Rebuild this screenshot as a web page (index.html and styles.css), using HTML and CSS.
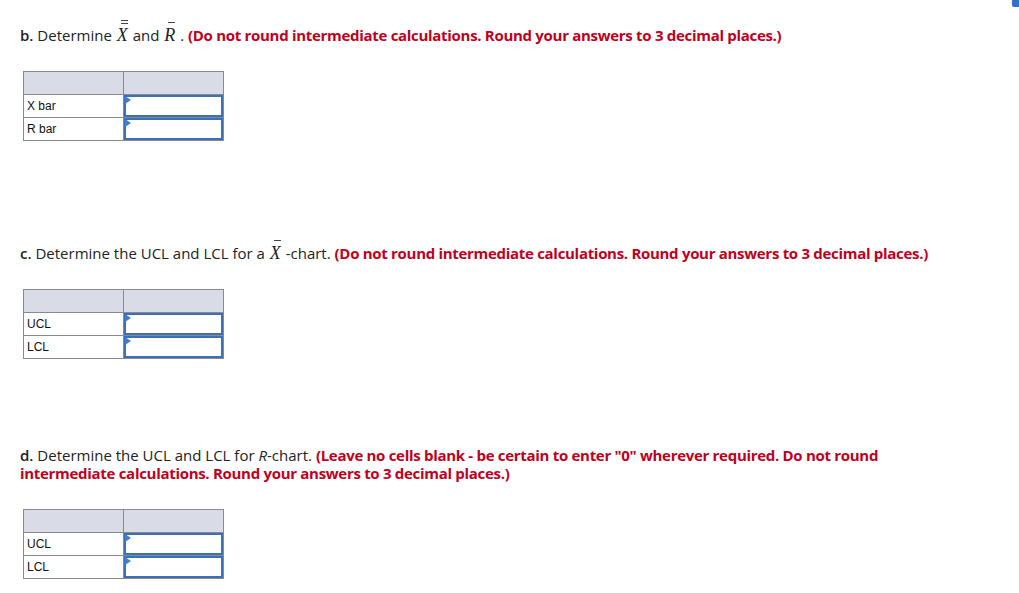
FILE: index.html
```html
<!DOCTYPE html>
<html lang="en">
<head>
    <meta charset="UTF-8">
    <title>Control charts - parts b to d</title>
    <link rel="stylesheet" href="styles.css">
</head>
<body>
    <div class="corner-tab"></div>

    <div class="part part-b">
        <p class="prompt"><b>b.</b> Determine <span class="math dbl">X</span> and <span class="math bar">R</span> . <span class="note">(Do not round intermediate calculations. Round your answers to 3 decimal places.)</span></p>
        <table class="answers">
            <tr class="head"><th></th><th></th></tr>
            <tr><td class="label">X bar</td><td class="entry"><span class="box"></span></td></tr>
            <tr><td class="label">R bar</td><td class="entry"><span class="box"></span></td></tr>
        </table>
    </div>

    <div class="part part-c">
        <p class="prompt"><b>c.</b> Determine the UCL and LCL for a <span class="math bar">X</span> -chart. <span class="note">(Do not round intermediate calculations. Round your answers to 3 decimal places.)</span></p>
        <table class="answers">
            <tr class="head"><th></th><th></th></tr>
            <tr><td class="label">UCL</td><td class="entry"><span class="box"></span></td></tr>
            <tr><td class="label">LCL</td><td class="entry"><span class="box"></span></td></tr>
        </table>
    </div>

    <div class="part part-d">
        <p class="prompt"><b>d.</b> Determine the UCL and LCL for <i>R</i>-chart. <span class="note">(Leave no cells blank - be certain to enter "0" wherever required. Do not round intermediate calculations. Round your answers to 3 decimal places.)</span></p>
        <table class="answers">
            <tr class="head"><th></th><th></th></tr>
            <tr><td class="label">UCL</td><td class="entry"><span class="box"></span></td></tr>
            <tr><td class="label">LCL</td><td class="entry"><span class="box"></span></td></tr>
        </table>
    </div>
</body>
</html>
```

FILE: styles.css
```css
body {
    margin: 0;
    padding: 0 20px;
    background: #fff;
    color: #222;
    font-family: "Open Sans", Lato, sans-serif;
}
.corner-tab {
    position: absolute;
    top: 0;
    right: 0;
    width: 7px;
    height: 7px;
    background: #2f73c6;
    border-bottom-left-radius: 2px;
}
.part-b {
    padding-top: 26px;
}
.part-c {
    margin-top: 103px;
}
.part-d {
    margin-top: 87px;
    width: 900px;
}
.prompt {
    margin: 0 0 27px;
    font-size: 15px;
    line-height: 18px;
}
.part-d .prompt {
    margin-bottom: 27px;
}
.prompt b {
    font-weight: 600;
}
.note {
    color: #c0001c;
    font-weight: 700;
    letter-spacing: -0.3px;
}
.math {
    position: relative;
    font-family: "Liberation Serif", serif;
    font-style: italic;
    font-size: 18px;
    padding: 0 1px;
}
.math::before {
    content: "";
    position: absolute;
    left: 5px;
    width: 7px;
    top: -3px;
    border-top: 1px solid #444;
}
.math.dbl::before {
    top: -5px;
    height: 2px;
    border-bottom: 1px solid #444;
}
.answers {
    margin-left: 3px;
    border-collapse: collapse;
    font-family: "Liberation Sans", Arial, sans-serif;
    font-size: 12px;
    color: #111;
}
.answers th,
.answers td {
    border: 1px solid #8a8a8a;
    width: 99px;
    height: 22px;
    padding: 0;
}
.answers .head th {
    background: #d9dce6;
}
.answers .label {
    padding-left: 3px;
    width: 96px;
}
.answers .entry {
    vertical-align: top;
}
.box {
    position: relative;
    display: block;
    box-sizing: border-box;
    height: 22px;
    border: 2px solid #3b70b6;
}
.box::before {
    content: "";
    position: absolute;
    left: -1px;
    top: -1px;
    border-left: 6px solid #3c7fd6;
    border-top: 4px solid transparent;
    border-bottom: 4px solid transparent;
}
```
